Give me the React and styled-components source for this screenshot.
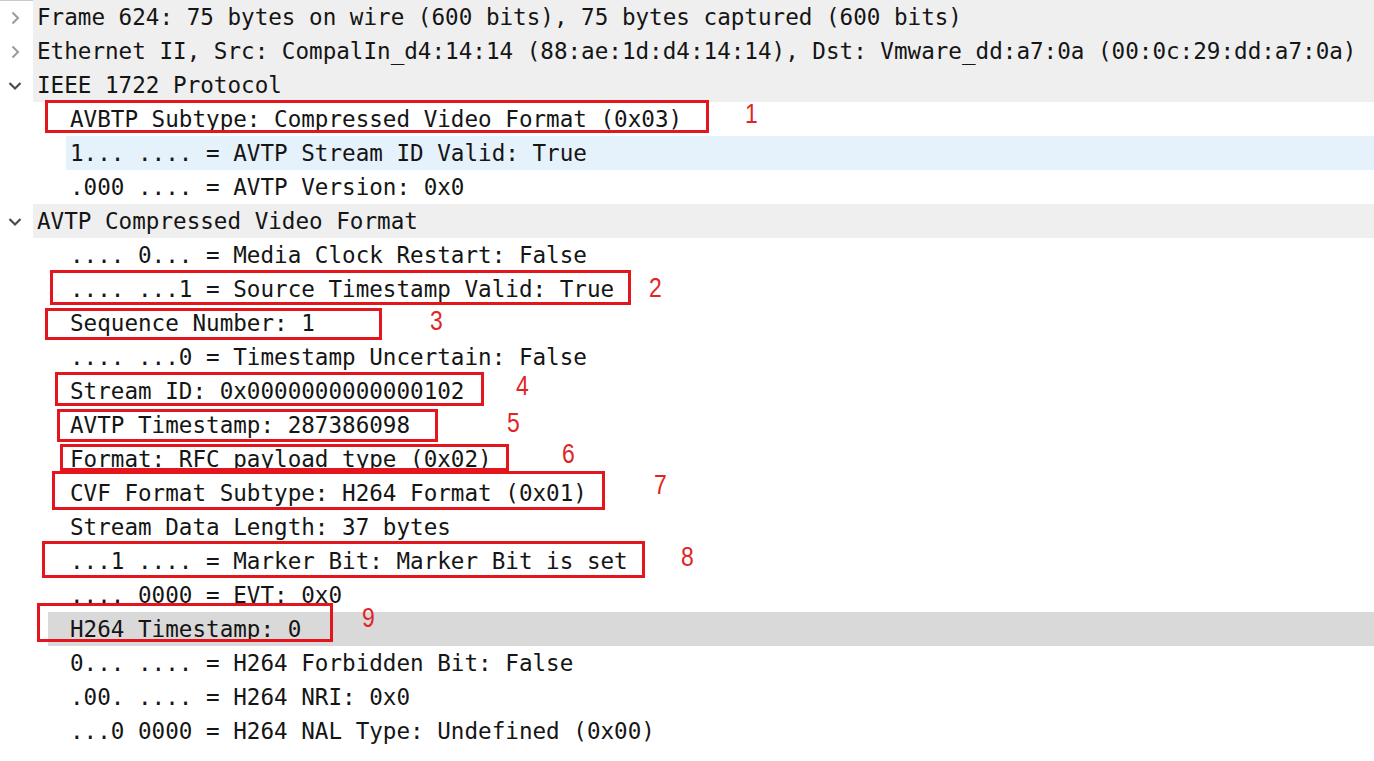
import React from 'react';
import styled, { createGlobalStyle } from 'styled-components';

const GlobalStyle = createGlobalStyle`
    html, body {
        margin: 0;
        padding: 0;
        background: #ffffff;
    }
`;

const Pane = styled.div`
    position: relative;
    width: 1374px;
    height: 761px;
    overflow: hidden;
    background: #ffffff;
    font-family: "DejaVu Sans Mono", "Liberation Mono", monospace;
    font-size: 22.6px;
    color: #151515;
`;

const Row = styled.div`
    display: flex;
    height: 34px;
    box-shadow: ${(p) => (p.$topEdge ? 'inset 0 1px 0 #c9c9c9' : 'none')};
`;

const Toggle = styled.div`
    flex: 0 0 ${(p) => p.$width}px;
    display: flex;
    align-items: center;
    justify-content: center;
    padding: 1px 3px 0 0;
    box-sizing: border-box;
`;

const Label = styled.div`
    flex: 1;
    height: 34px;
    box-sizing: border-box;
    padding-top: 2px;
    line-height: 31px;
    padding-left: ${(p) => p.$pad}px;
    white-space: pre;
    background: ${(p) => p.$bg || 'transparent'};
`;

const Mark = styled.div`
    position: absolute;
    border: 3px solid #e3151d;
    box-sizing: border-box;
`;

const Note = styled.span`
    position: absolute;
    font-family: "Liberation Sans", Arial, sans-serif;
    font-size: 27px;
    line-height: 26px;
    color: #e02525;
    transform: scaleX(0.85);
    transform-origin: left center;
`;

const Chevron = ({ open }) =>
    open ? (
        <svg width="16" height="10" viewBox="0 0 16 10">
            <path d="M2.5 2 L8 7.5 L13.5 2" fill="none" stroke="#4a4a4a" strokeWidth="2.2" />
        </svg>
    ) : (
        <svg width="10" height="16" viewBox="0 0 10 16">
            <path d="M2.5 2.5 L8 8 L2.5 13.5" fill="none" stroke="#9a9a9a" strokeWidth="2" />
        </svg>
    );

const GRAY = '#efefef';
const BLUE = '#e5f1fb';
const DARK = '#d9d9d9';

const rows = [
    { text: 'Frame 624: 75 bytes on wire (600 bits), 75 bytes captured (600 bits)', top: true, arrow: 'closed', bg: GRAY },
    { text: 'Ethernet II, Src: CompalIn_d4:14:14 (88:ae:1d:d4:14:14), Dst: Vmware_dd:a7:0a (00:0c:29:dd:a7:0a)', top: true, arrow: 'closed', bg: GRAY },
    { text: 'IEEE 1722 Protocol', top: true, arrow: 'open', bg: GRAY },
    { text: 'AVBTP Subtype: Compressed Video Format (0x03)' },
    { text: '1... .... = AVTP Stream ID Valid: True', bg: BLUE },
    { text: '.000 .... = AVTP Version: 0x0' },
    { text: 'AVTP Compressed Video Format', top: true, arrow: 'open', bg: GRAY },
    { text: '.... 0... = Media Clock Restart: False' },
    { text: '.... ...1 = Source Timestamp Valid: True' },
    { text: 'Sequence Number: 1' },
    { text: '.... ...0 = Timestamp Uncertain: False' },
    { text: 'Stream ID: 0x0000000000000102' },
    { text: 'AVTP Timestamp: 287386098' },
    { text: 'Format: RFC payload type (0x02)' },
    { text: 'CVF Format Subtype: H264 Format (0x01)' },
    { text: 'Stream Data Length: 37 bytes' },
    { text: '...1 .... = Marker Bit: Marker Bit is set' },
    { text: '.... 0000 = EVT: 0x0' },
    { text: 'H264 Timestamp: 0', bg: DARK, hlStart: 48 },
    { text: '0... .... = H264 Forbidden Bit: False' },
    { text: '.00. .... = H264 NRI: 0x0' },
    { text: '...0 0000 = H264 NAL Type: Undefined (0x00)' },
];

const marks = [
    { n: '1', box: [45, 100, 709, 133], at: [745, 101] },
    { n: '2', box: [50, 270, 631, 305], at: [649, 275] },
    { n: '3', box: [45, 308, 382, 340], at: [430, 308] },
    { n: '4', box: [55, 372, 484, 406], at: [516, 373] },
    { n: '5', box: [57, 409, 438, 442], at: [507, 410] },
    { n: '6', box: [60, 444, 509, 471], at: [562, 441] },
    { n: '7', box: [52, 471, 605, 510], at: [654, 472] },
    { n: '8', box: [42, 541, 645, 578], at: [681, 544] },
    { n: '9', box: [37, 603, 333, 642], at: [362, 605] },
];

const App = () => {
    return (
        <Pane>
            <GlobalStyle />
            {rows.map((r, i) => {
                const indent = r.top ? 33 : r.hlStart || 66;
                const pad = r.top ? 4 : 70 - indent;
                return (
                    <Row key={i} $topEdge={i === 0}>
                        <Toggle $width={indent}>
                            {r.arrow && <Chevron open={r.arrow === 'open'} />}
                        </Toggle>
                        <Label $pad={pad} $bg={r.bg}>
                            {r.text}
                        </Label>
                    </Row>
                );
            })}
            {marks.map((m) => (
                <React.Fragment key={m.n}>
                    <Mark
                        style={{
                            left: m.box[0],
                            top: m.box[1],
                            width: m.box[2] - m.box[0],
                            height: m.box[3] - m.box[1],
                        }}
                    />
                    <Note style={{ left: m.at[0], top: m.at[1] }}>{m.n}</Note>
                </React.Fragment>
            ))}
        </Pane>
    );
};

export default App;
